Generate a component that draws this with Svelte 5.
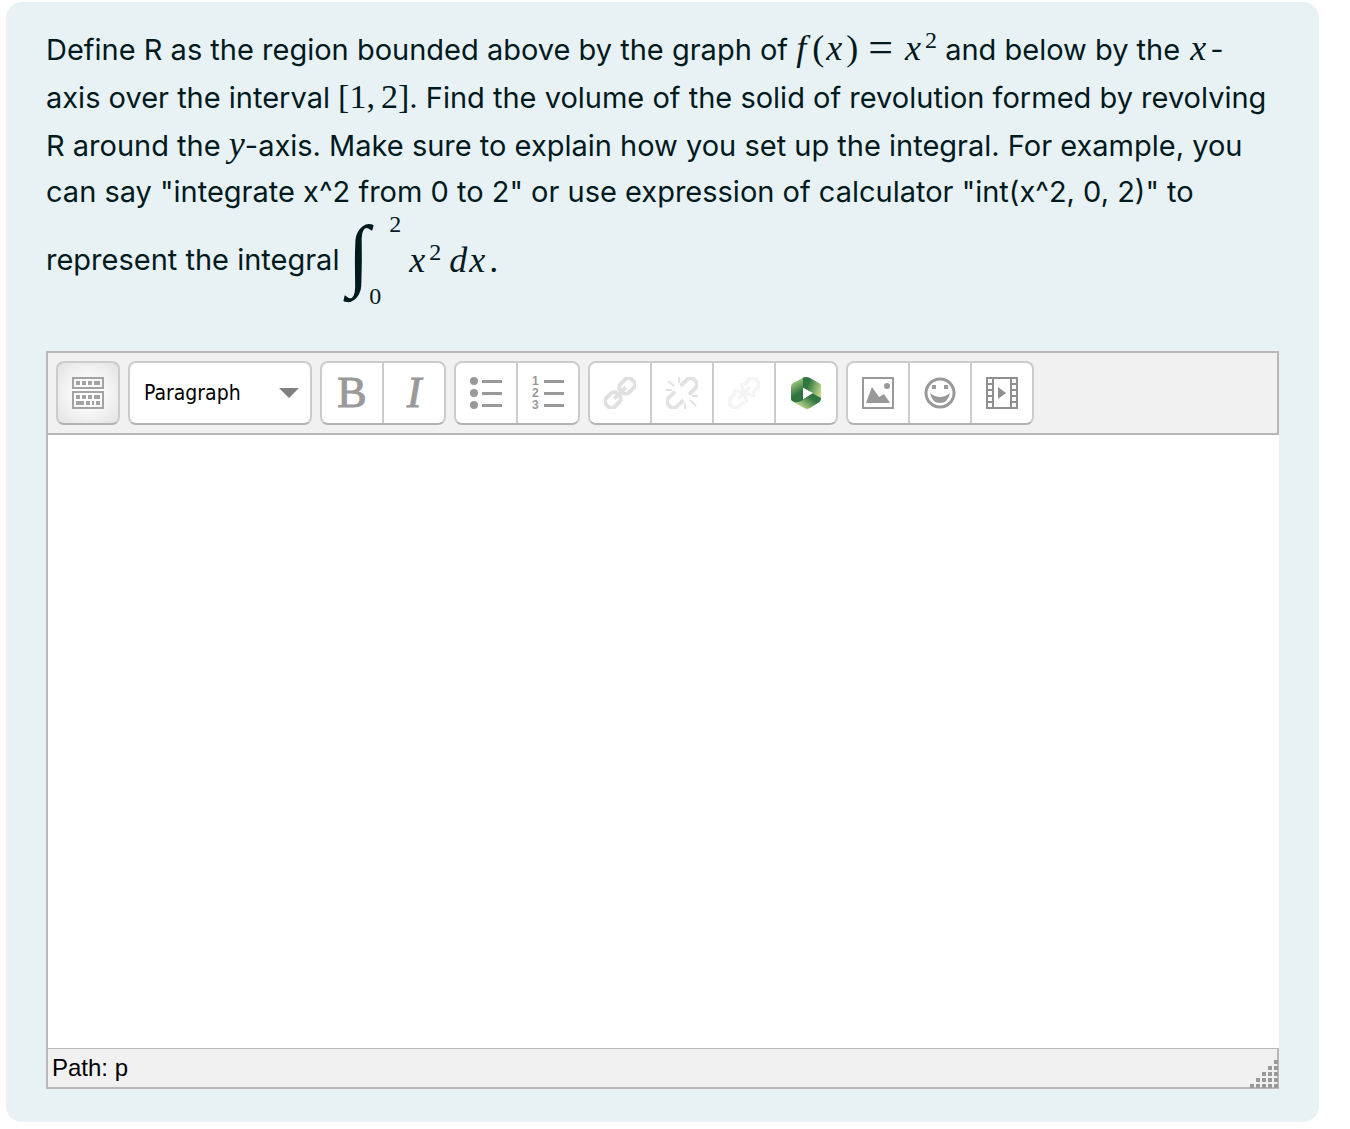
<script lang="ts">
  let content = $state("");
  let format = $state("Paragraph");
  let toolbarExpanded = $state(true);

  const formats = ["Paragraph", "Heading", "Preformatted"];

  const gripRows = [1, 2, 3, 4, 5];
</script>

<main class="question">
  <p class="question__text">
    <span class="line"
      >Define R as the region bounded above by the graph of <span class="math"
        ><i class="math__f">f</i>(<i class="math__x">x</i>)<span class="math__rel">=</span><i
          class="math__x">x</i
        ><sup>2</sup></span
      > and below by the <span class="math"><i class="math__x">x</i></span>-</span
    >
    <span class="line"
      >axis over the interval <span class="math math--interval"
        >[1,<span class="math__gap">2</span>]</span
      >. Find the volume of the solid of revolution formed by revolving</span
    >
    <span class="line"
      >R around the <span class="math"><i>y</i></span>-axis. Make sure to explain
      how you set up the integral. For example, you</span
    >
    <span class="line line--plain"
      >can say "integrate x^2 from 0 to 2" or use expression of calculator "int(x^2, 0, 2)" to</span
    >
    <span class="line line--display">
      <span>represent the integral</span>
      <span class="math integral">
        <i class="integral__sign">∫</i>
        <span class="integral__limits"><span class="integral__upper">2</span><span>0</span></span>
        <span class="integral__body"
          ><i class="math__x">x</i><sup>2</sup><i class="math__d">d</i><i class="math__x">x</i>.</span
        >
      </span>
    </span>
  </p>

  <div class="editor">
    <div class="toolbar" role="toolbar" aria-label="Editor toolbar">
      <div class="group group--active">
        <button
          type="button"
          aria-label="Toolbar toggle"
          aria-pressed={toolbarExpanded}
          onclick={() => (toolbarExpanded = !toolbarExpanded)}
        >
          <svg viewBox="0 0 32 32" fill="none" stroke="#a3a3a3" stroke-width="2">
            <path d="M1 1h30v10H1zM1 15h30v16H1z" />
            <path stroke-width="4" d="M4 6h4m2 0h4m2 0h4m2 0h6M4 20h4m2 0h4m2 0h4m2 0h6M4 26h8m2 0h4m2 0h2m2 0h4" />
          </svg>
        </button>
      </div>

      <div class="format">
        <select bind:value={format} aria-label="Format">
          {#each formats as name (name)}
            <option value={name}>{name}</option>
          {/each}
        </select>
      </div>

      <div class="group">
        <button type="button" class="letter" aria-label="Bold">B</button>
        <button type="button" class="letter" aria-label="Italic"><i>I</i></button>
      </div>

      <div class="group">
        <button type="button" aria-label="Unordered list">
          <svg viewBox="0 0 32 32" fill="#999">
            <circle cx="4" cy="4" r="4" /><circle cx="4" cy="16" r="4" /><circle cx="4" cy="28" r="4" />
            <path d="M12 3h20v3H12zM12 15h20v3H12zM12 27h20v3H12z" />
          </svg>
        </button>
        <button type="button" aria-label="Ordered list">
          <svg class="numbers" viewBox="0 0 32 32" fill="#999">
            <text x="0" y="8">1</text><text x="0" y="20">2</text><text x="0" y="32">3</text>
            <path d="M12 3h20v3H12zM12 15h20v3H12zM12 27h20v3H12z" />
          </svg>
        </button>
      </div>

      <div class="group">
        <button type="button" aria-label="Link">
          <svg viewBox="0 0 32 32" fill="none" stroke="#e0e0e0" stroke-width="4">
            <g transform="rotate(-45 16 16)">
              <rect x="-2" y="10" width="16" height="12" rx="5" />
              <rect x="18" y="10" width="16" height="12" rx="5" />
              <path d="M8 16h16" />
            </g>
          </svg>
        </button>
        <button type="button" aria-label="Unlink">
          <svg viewBox="0 0 32 32" fill="none" stroke="#e2e2e2" stroke-width="4">
            <g transform="rotate(-45 16 16)">
              <path d="M12 10H3a5 5 0 0 0-5 5v2a5 5 0 0 0 5 5h9M20 10h9a5 5 0 0 1 5 5v2a5 5 0 0 1-5 5h-9" />
            </g>
            <path stroke-width="2" d="M13 0v6M2 4l6 5M0 13h6M19 26v6M24 23l6 6M26 19h6" />
          </svg>
        </button>
        <button type="button" aria-label="Prevent automatic linking">
          <svg viewBox="0 0 32 32" fill="none" stroke="#f4f4f4" stroke-width="4">
            <g transform="rotate(-45 16 16)">
              <path d="M10 10H3a5 5 0 0 0-5 5v2a5 5 0 0 0 5 5h7M22 10h7a5 5 0 0 1 5 5v2a5 5 0 0 1-5 5h-7M8 16h16" />
            </g>
            <path d="M5 13l22 6M13 6l6 20" stroke-width="3" />
          </svg>
        </button>
        <button type="button" aria-label="Insert video">
          <svg viewBox="0 0 32 32">
            <defs>
              <linearGradient id="leaf-left" x1="0" y1="0" x2="0.3" y2="1">
                <stop offset="0.1" stop-color="#b9d487" /><stop offset="0.75" stop-color="#2f7540" />
              </linearGradient>
              <linearGradient id="leaf-right" x1="0" y1="0.2" x2="1" y2="0.6">
                <stop offset="0.3" stop-color="#2f7540" /><stop offset="1" stop-color="#bdd588" />
              </linearGradient>
              <linearGradient id="leaf-bottom" x1="0.1" y1="0.9" x2="0.9" y2="0.3">
                <stop offset="0.1" stop-color="#c5dc91" /><stop offset="0.8" stop-color="#2f7540" />
              </linearGradient>
            </defs>
            <path fill="url(#leaf-right)" d="M12 1q4-2 8 0l9 5q2 1 2 3v13l-9-6-10-6z" />
            <path fill="url(#leaf-bottom)" d="M3 25l9-2 10-7 9 5q0 4-3 5l-8 5q-3 2-6 0z" />
            <path fill="url(#leaf-left)" d="M13 1v22q-6 4-11 1-1-1-1-2V9q0-1 2-3z" />
            <path fill="#fff" d="M13 11v11l10-6z" />
          </svg>
        </button>
      </div>

      <div class="group">
        <button type="button" aria-label="Image">
          <svg viewBox="0 0 32 32" fill="#999">
            <path fill="none" stroke="#999" stroke-width="2" d="M1 1h30v30H1z" />
            <path d="M4 26 10 10l7 10 5-3 6 9z" /><circle cx="25" cy="9" r="3" />
          </svg>
        </button>
        <button type="button" aria-label="Emoticons">
          <svg viewBox="0 0 32 32" fill="#999">
            <circle cx="16" cy="16" r="14" fill="none" stroke="#999" stroke-width="3" />
            <path d="M8 8h4v4H8zM20 8h4v4h-4zM6 16q10 8 20 0-2 10-10 10T6 16z" />
          </svg>
        </button>
        <button type="button" aria-label="Insert media">
          <svg viewBox="0 0 32 32" fill="#8f8f8f">
            <path
              fill-rule="evenodd"
              d="M0 0h32v32H0zM8 2v28h16V2zM2 2v4h4V2zM2 8v4h4V8zM2 14v4h4v-4zM2 20v4h4v-4zM2 26v4h4v-4zM26 2v4h4V2zM26 8v4h4V8zM26 14v4h4v-4zM26 20v4h4v-4zM26 26v4h4v-4z"
            />
            <path d="M12 10v12l8-6z" />
          </svg>
        </button>
      </div>
    </div>

    <textarea class="editor__area" aria-label="Answer" bind:value={content}></textarea>

    <div class="statusbar">
      <span>Path: p</span>
      <svg class="grip" viewBox="0 0 30 30" fill="#999">
        {#each gripRows as row (row)}
          {#each gripRows.slice(5 - row) as col (col)}
            <rect x={col * 6 - 5} y={row * 6 - 5} width="4" height="4" />
          {/each}
        {/each}
      </svg>
    </div>
  </div>
</main>

<style>
  :global(body) {
    background: #fff;
  }

  .question {
    margin: 2px 31px 7px 6px;
    padding: 24px 40px 33px;
    border-radius: 16px;
    background: #e8f1f4;
    color: #001a1e;
    font-family: Inter, sans-serif;
  }

  .question__text {
    margin: 0 0 47px;
    font-size: 29px;
  }

  .line {
    display: block;
    height: 48px;
    line-height: 48px;
    white-space: nowrap;
  }

  .line--plain {
    height: 46px;
    line-height: 44px;
  }

  .line--display {
    display: flex;
    align-items: center;
    gap: 8px;
    height: 88px;
  }

  .math {
    font-family: "Liberation Serif", serif;
    font-size: 36px;
    line-height: 1;
  }

  .math--interval {
    font-size: 34px;
  }

  .math__f {
    padding-right: 6px;
  }

  .math__x {
    padding: 0 4px 0 2px;
  }

  .math__rel {
    padding: 0 10px;
    font-size: 44px;
    line-height: 0;
    vertical-align: -2px;
  }

  .math__gap {
    padding-left: 6px;
  }

  .math__d {
    padding-left: 8px;
  }

  .math sup {
    font-size: 24px;
    line-height: 0;
    vertical-align: 12px;
  }

  .integral {
    display: flex;
    align-items: center;
  }

  .integral__sign {
    padding-bottom: 12px;
    font-size: 80px;
  }

  .integral__limits {
    display: flex;
    flex-direction: column;
    justify-content: space-between;
    height: 96px;
    font-size: 24px;
  }

  .integral__upper {
    padding-left: 20px;
  }

  .integral__body {
    margin-left: 6px;
  }

  .toolbar {
    display: flex;
    flex-wrap: wrap;
    gap: 8px;
    padding: 8px;
    border: 2px solid #b8b8b8;
    background: #f1f1f1;
  }

  .group {
    display: flex;
    overflow: hidden;
    border: 2px solid #ccc;
    border-bottom-color: #b3b3b3;
    border-radius: 8px;
    background: #fff;
  }

  .group--active {
    background: radial-gradient(#fff 20%, #e2e2e2);
  }

  .group button {
    display: grid;
    place-items: center;
    box-sizing: content-box;
    width: 60px;
    height: 60px;
    padding: 0;
    border: 0;
    background: none;
    color: #999;
  }

  .group button + button {
    border-left: 2px solid #ccc;
  }

  .group svg {
    width: 32px;
    height: 32px;
  }

  .group .numbers {
    overflow: visible;
  }

  .numbers text {
    font: bold 12px "Liberation Sans", sans-serif;
  }

  .group .letter {
    font-family: "Liberation Serif", serif;
    font-size: 44px;
    line-height: 60px;
    -webkit-text-stroke: 1px #999;
  }

  .format {
    position: relative;
  }

  .format::after {
    content: "";
    position: absolute;
    top: 27px;
    right: 13px;
    border: 10px solid transparent;
    border-top-color: #808080;
    border-bottom: 0;
    pointer-events: none;
  }

  .format select {
    appearance: none;
    width: 184px;
    height: 64px;
    padding: 0 40px 0 14px;
    border: 2px solid #ccc;
    border-bottom-color: #b3b3b3;
    border-radius: 8px;
    background: #fff;
    color: #000;
    font: 21px "DejaVu Sans Condensed", "Noto Sans", sans-serif;
  }

  .editor__area {
    display: block;
    box-sizing: border-box;
    width: 100%;
    height: 613px;
    padding: 16px;
    border: 0;
    border-left: 2px solid #b8b8b8;
    outline: 0;
    background: #fff;
    font: 24px Inter, sans-serif;
    resize: none;
  }

  .statusbar {
    display: flex;
    align-items: center;
    justify-content: space-between;
    height: 38px;
    padding-left: 4px;
    border: 2px solid #b8b8b8;
    border-top-width: 1px;
    background: #f1f1f1;
    color: #000;
    font: 24px "Liberation Sans", sans-serif;
  }

  .grip {
    align-self: flex-end;
    width: 30px;
    height: 30px;
    margin: 0 -2px -2px 0;
  }
</style>
